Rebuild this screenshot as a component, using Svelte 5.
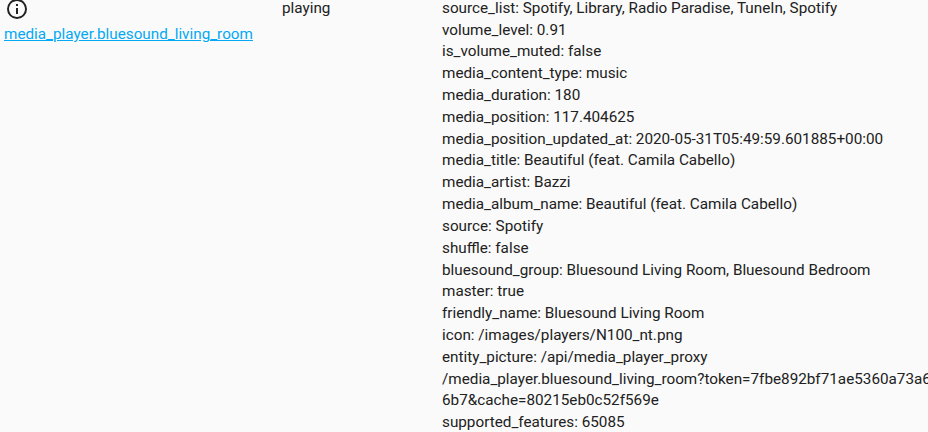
<script lang="ts">
	const entityId = 'media_player.bluesound_living_room';
	const state = 'playing';

	const attributes = [
		'source_list: Spotify, Library, Radio Paradise, TuneIn, Spotify',
		'volume_level: 0.91',
		'is_volume_muted: false',
		'media_content_type: music',
		'media_duration: 180',
		'media_position: 117.404625',
		'media_position_updated_at: 2020-05-31T05:49:59.601885+00:00',
		'media_title: Beautiful (feat. Camila Cabello)',
		'media_artist: Bazzi',
		'media_album_name: Beautiful (feat. Camila Cabello)',
		'source: Spotify',
		'shuffle: false',
		'bluesound_group: Bluesound Living Room, Bluesound Bedroom',
		'master: true',
		'friendly_name: Bluesound Living Room',
		'icon: /images/players/N100_nt.png',
		'entity_picture: /api/media_player_proxy',
		'/media_player.bluesound_living_room?token=7fbe892bf71ae5360a73a6c41d09e8f2',
		'6b7&cache=80215eb0c52f569e',
		'supported_features: 65085'
	];
</script>

<div class="states-row">
	<div class="entity-cell">
		<button class="info-btn" aria-label="More info">
			<svg width="24" height="24" viewBox="0 0 24 24" fill="currentColor">
				<path
					d="M11,9H13V7H11M12,20C7.59,20 4,16.41 4,12C4,7.59 7.59,4 12,4C16.41,4 20,7.59 20,12C20,16.41 16.41,20 12,20M12,2A10,10 0 0,0 2,12A10,10 0 0,0 12,22A10,10 0 0,0 22,12A10,10 0 0,0 12,2M11,17H13V11H11V17Z"
				/>
			</svg>
		</button>
		<a href="#entity">{entityId}</a>
	</div>
	<div class="state-cell">{state}</div>
	<div class="attr-cell">
		{#each attributes as line}
			<div>{line}</div>
		{/each}
	</div>
</div>

<style>
	:global(body) {
		background: #fafafa;
		overflow: hidden;
	}

	.states-row {
		display: grid;
		grid-template-columns: 282px 160px 1fr;
		height: 432px;
		overflow: hidden;
		color: #212121;
		font-family: Roboto, sans-serif;
		font-size: 15.27px;
		line-height: 21.82px;
	}

	.entity-cell {
		padding-left: 4px;
		display: flex;
		flex-direction: column;
		align-items: flex-start;
	}

	.info-btn {
		background: transparent;
		border: none;
		padding: 0;
		margin: -3px 0 0 1px;
		color: #212121;
		display: flex;
	}

	.entity-cell a {
		color: #03a9f4;
		margin-top: 3px;
	}

	.state-cell,
	.attr-cell {
		margin-top: -2.22px;
		white-space: nowrap;
	}
</style>
